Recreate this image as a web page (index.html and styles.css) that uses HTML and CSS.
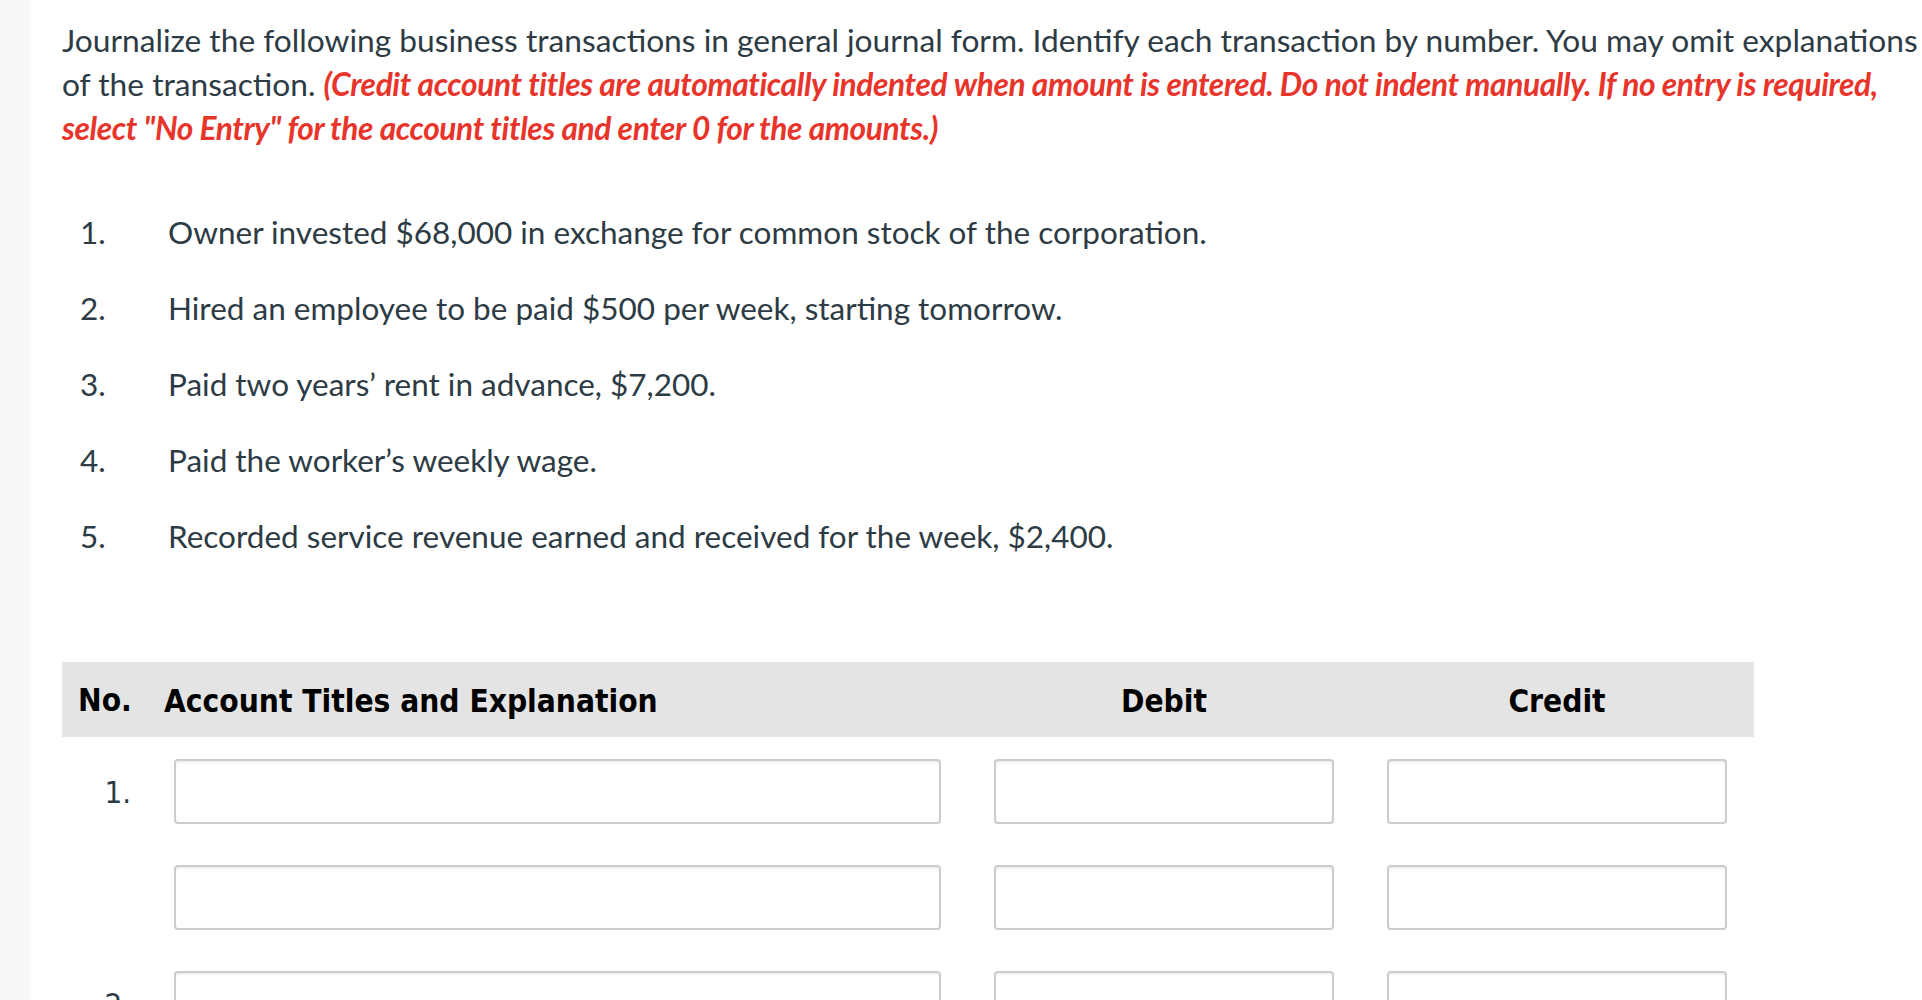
FILE: index.html
```html
<!DOCTYPE html>
<html lang="en">
<head>
<meta charset="utf-8">
<title>Journal entries</title>
<link rel="stylesheet" href="styles.css">
</head>
<body>
<div class="page">
  <aside class="rail"></aside>
  <main class="content">
    <p class="intro">Journalize the following business transactions in general journal form. Identify each transaction by number. You may omit explanations of the transaction. <em class="note">(Credit account titles are automatically indented when amount is entered. Do not indent manually. If no entry is required, select "No Entry" for the account titles and enter 0 for the amounts.)</em></p>

    <ol class="tx">
      <li><span class="num">1.</span><span>Owner invested $68,000 in exchange for common stock of the corporation.</span></li>
      <li><span class="num">2.</span><span>Hired an employee to be paid $500 per week, starting tomorrow.</span></li>
      <li><span class="num">3.</span><span>Paid two years’ rent in advance, $7,200.</span></li>
      <li><span class="num">4.</span><span>Paid the worker’s weekly wage.</span></li>
      <li><span class="num">5.</span><span>Recorded service revenue earned and received for the week, $2,400.</span></li>
    </ol>

    <section class="journal">
      <div class="jhead">
        <div class="h-no">No.</div>
        <div class="h-acct">Account Titles and Explanation</div>
        <div class="h-amt h-debit">Debit</div>
        <div class="h-amt h-credit">Credit</div>
      </div>
      <div class="jbody">
        <div class="jrow">
          <div class="rno">1.</div>
          <input class="field acct" type="text">
          <input class="field debit" type="text">
          <input class="field credit" type="text">
        </div>
        <div class="jrow">
          <div class="rno"></div>
          <input class="field acct" type="text">
          <input class="field debit" type="text">
          <input class="field credit" type="text">
        </div>
        <div class="jrow">
          <div class="rno">2.</div>
          <input class="field acct" type="text">
          <input class="field debit" type="text">
          <input class="field credit" type="text">
        </div>
      </div>
    </section>
  </main>
</div>
</body>
</html>
```

FILE: styles.css
```css
html, body {
  margin: 0;
  padding: 0;
  background: #ffffff;
  overflow: hidden;
}

.page {
  display: flex;
  min-height: 1000px;
}

.rail {
  width: 31px;
  flex: none;
  background: #f8f8f8;
}

.content {
  flex: 1;
  padding-left: 31px;
  padding-top: 18px;
  color: #2d3b45;
  font-family: Lato, "Open Sans", sans-serif;
  font-size: 31.7px;
}

.intro {
  margin: 0;
  line-height: 44px;
  width: 1872px;
}

.note {
  color: #e8342a;
  font-weight: 700;
  font-style: italic;
  letter-spacing: -0.38px;
}

.tx {
  list-style: none;
  margin: 44px 0 0;
  padding: 0;
  font-size: 31.5px;
}

.tx li {
  display: flex;
  height: 76px;
  align-items: center;
}

.tx .num {
  width: 106px;
  padding-left: 18px;
  box-sizing: border-box;
  flex: none;
}

.journal {
  margin-top: 88px;
  width: 1692px;
}

.jhead {
  display: grid;
  grid-template-columns: 102px 830px 340px 53px 340px;
  height: 75px;
  align-items: center;
  background: #e4e4e4;
  color: #000;
  font-family: "DejaVu Sans Condensed", "DejaVu Sans", Verdana, sans-serif;
  font-stretch: condensed;
  font-weight: 700;
  font-size: 31.4px;
}

.h-no {
  padding-left: 16px;
}

.h-acct {
  padding-top: 2px;
}

.h-amt {
  text-align: center;
  padding-top: 2px;
}

.h-debit { grid-column: 3; }
.h-credit { grid-column: 5; }

.jbody {
  display: flex;
  flex-direction: column;
  gap: 41px;
  padding-top: 22px;
}

.jrow {
  display: grid;
  grid-template-columns: 112px 767px 53px 340px 53px 340px;
  align-items: center;
}

.rno {
  grid-column: 1;
  font-family: "DejaVu Sans Condensed", "DejaVu Sans", Verdana, sans-serif;
  font-stretch: condensed;
  font-size: 31px;
  color: #2d3b45;
  text-align: right;
  padding-right: 43px;
}

.field {
  box-sizing: border-box;
  height: 65px;
  width: 100%;
  margin: 0;
  border: 2px solid #cccccc;
  border-radius: 4px;
  background: #ffffff;
  box-shadow: inset 0 2px 2px rgba(0, 0, 0, 0.06);
  font: inherit;
  outline: none;
}

.acct { grid-column: 2; }
.debit { grid-column: 4; }
.credit { grid-column: 6; }
```
